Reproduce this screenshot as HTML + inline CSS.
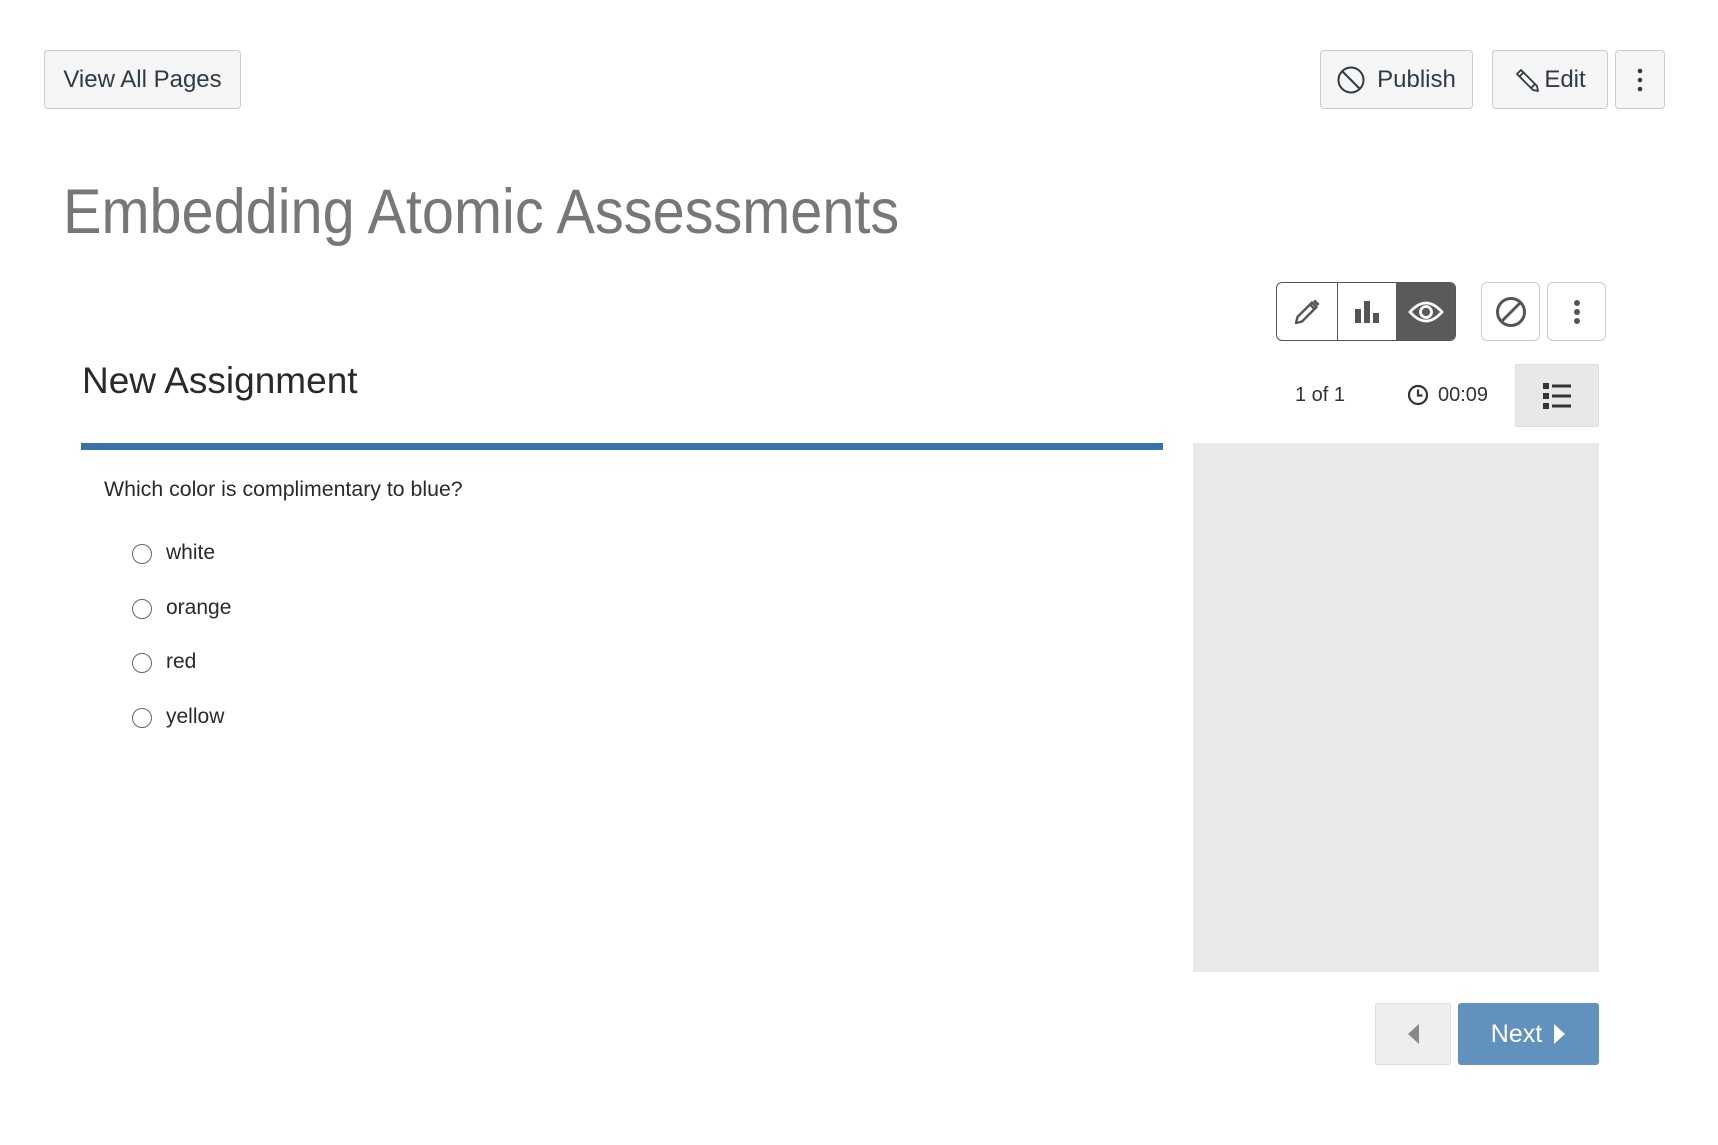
<!DOCTYPE html>
<html><head><meta charset="utf-8"><style>
*{box-sizing:border-box;margin:0;padding:0}
body{width:1718px;height:1145px;background:#fff;position:relative;overflow:hidden;font-family:"Liberation Sans",sans-serif;color:#2d3b45}
.abs{position:absolute}
.btn{position:absolute;background:#f5f5f5;border:1px solid #c7cdd1;border-radius:4px;display:flex;align-items:center;justify-content:center;font-size:24px;color:#2d3b45}
</style></head><body>
<div class="btn" style="left:44px;top:50px;width:197px;height:59px">View All Pages</div>
<div class="btn" style="left:1320px;top:50px;width:153px;height:59px">
<svg width="28" height="28" viewBox="0 0 28 28" style="margin-right:12px"><circle cx="14" cy="14" r="12.5" fill="none" stroke="#2d3b45" stroke-width="2"/><line x1="5.5" y1="5.5" x2="22.5" y2="22.5" stroke="#2d3b45" stroke-width="2"/></svg>Publish</div>
<div class="btn" style="left:1492px;top:50px;width:116px;height:59px">
<svg width="26" height="26" viewBox="0 0 26 26" style="margin-right:4px"><path d="M3 7 L7 3 L23 19 L24 24 L19 23 Z M5.5 9.5 L9.5 5.5 M17 21 L21 17" fill="none" stroke="#2d3b45" stroke-width="1.8" stroke-linejoin="round"/></svg>Edit</div>
<div class="btn" style="left:1615px;top:50px;width:50px;height:59px">
<svg width="6" height="24"><circle cx="3" cy="3" r="2.3" fill="#2d3b45"/><circle cx="3" cy="12" r="2.3" fill="#2d3b45"/><circle cx="3" cy="21" r="2.3" fill="#2d3b45"/></svg></div>

<div class="abs" style="left:63px;top:176px;font-size:63px;color:#777;white-space:nowrap;transform:scaleX(0.915);transform-origin:0 0">Embedding Atomic Assessments</div>

<div class="abs" style="left:1276px;top:282px;width:180px;height:59px;border:1.5px solid #555;border-radius:6px;overflow:hidden;display:flex">
 <div style="width:61px;border-right:1.5px solid #555;display:flex;align-items:center;justify-content:center">
  <svg width="30" height="30" viewBox="0 0 30 30"><path d="M4 26 L5.5 20 L20 5.5 L24.5 10 L10 24.5 Z M18 7.5 L22.5 12" fill="none" stroke="#555" stroke-width="2.4" stroke-linejoin="round"/><path d="M21 4.5 L23 2.5 L27.5 7 L25.5 9 Z" fill="#555"/></svg></div>
 <div style="width:58px;display:flex;align-items:center;justify-content:center">
  <svg width="26" height="26" viewBox="0 0 26 26"><rect x="1" y="10" width="6" height="14" fill="#555"/><rect x="10" y="2" width="6" height="22" fill="#555"/><rect x="19" y="14" width="6" height="10" fill="#555"/></svg></div>
 <div style="flex:1;background:#5a5a5a;display:flex;align-items:center;justify-content:center">
  <svg width="36" height="24" viewBox="0 0 36 24"><path d="M2 12 Q18 -6 34 12 Q18 30 2 12 Z" fill="none" stroke="#fff" stroke-width="2.8"/><circle cx="18" cy="12" r="5.5" fill="none" stroke="#fff" stroke-width="2.8"/></svg></div>
</div>
<div class="abs" style="left:1481px;top:282px;width:59px;height:59px;border:1.5px solid #ccc;border-radius:6px;display:flex;align-items:center;justify-content:center">
 <svg width="32" height="32" viewBox="0 0 32 32"><circle cx="16" cy="16" r="13.5" fill="none" stroke="#555" stroke-width="3"/><line x1="7" y1="25" x2="25" y2="7" stroke="#555" stroke-width="3"/></svg></div>
<div class="abs" style="left:1547px;top:282px;width:59px;height:59px;border:1.5px solid #ccc;border-radius:6px;display:flex;align-items:center;justify-content:center">
 <svg width="8" height="26"><circle cx="4" cy="4" r="3" fill="#555"/><circle cx="4" cy="13" r="3" fill="#555"/><circle cx="4" cy="22" r="3" fill="#555"/></svg></div>

<div class="abs" style="left:82px;top:360px;font-size:37px;color:#2a2a2a">New Assignment</div>

<div class="abs" style="left:1295px;top:384px;font-size:20px;color:#333">1 of 1</div>
<svg class="abs" style="left:1407px;top:384px" width="22" height="22" viewBox="0 0 22 22"><circle cx="11" cy="11" r="9" fill="none" stroke="#333" stroke-width="2.2"/><path d="M11 5.5 V11.5 H15.5" fill="none" stroke="#333" stroke-width="2.2"/></svg>
<div class="abs" style="left:1438px;top:384px;font-size:20px;color:#333">00:09</div>
<div class="abs" style="left:1515px;top:364px;width:84px;height:63px;background:#e8e8e8;border:1px solid #ddd;border-radius:2px;display:flex;align-items:center;justify-content:center">
 <svg width="28" height="26" viewBox="0 0 28 26"><rect x="0" y="0" width="6" height="6" fill="#333"/><rect x="0" y="10" width="6" height="6" fill="#333"/><rect x="0" y="20" width="6" height="6" fill="#333"/><rect x="9" y="1.5" width="19" height="3" fill="#333"/><rect x="9" y="11.5" width="19" height="3" fill="#333"/><rect x="9" y="21.5" width="19" height="3" fill="#333"/></svg></div>

<div class="abs" style="left:81px;top:443px;width:1082px;height:7px;background:#3872ab"></div>
<div class="abs" style="left:1193px;top:443px;width:406px;height:529px;background:#e9e9e9"></div>

<div class="abs" style="left:104px;top:477px;font-size:21.3px;color:#2a2a2a">Which color is complimentary to blue?</div>
<div class="abs" style="left:132px;top:544px;width:20px;height:20px;border:1.5px solid #666;border-radius:50%"></div>
<div class="abs" style="left:166px;top:541px;font-size:21px;color:#2a2a2a">white</div>
<div class="abs" style="left:132px;top:599px;width:20px;height:20px;border:1.5px solid #666;border-radius:50%"></div>
<div class="abs" style="left:166px;top:596px;font-size:21px;color:#2a2a2a">orange</div>
<div class="abs" style="left:132px;top:653px;width:20px;height:20px;border:1.5px solid #666;border-radius:50%"></div>
<div class="abs" style="left:166px;top:650px;font-size:21px;color:#2a2a2a">red</div>
<div class="abs" style="left:132px;top:708px;width:20px;height:20px;border:1.5px solid #666;border-radius:50%"></div>
<div class="abs" style="left:166px;top:705px;font-size:21px;color:#2a2a2a">yellow</div>

<div class="abs" style="left:1375px;top:1003px;width:76px;height:62px;background:#eee;border:1.5px solid #ddd;border-radius:3px;display:flex;align-items:center;justify-content:center">
 <svg width="12" height="20"><path d="M12 0 V20 L1 10 Z" fill="#888"/></svg></div>
<div class="abs" style="left:1458px;top:1003px;width:141px;height:62px;background:#6191bd;border-radius:3px;display:flex;align-items:center;justify-content:center;color:#fff;font-size:25px">Next<svg width="12" height="20" style="margin-left:12px"><path d="M0 0 V20 L11 10 Z" fill="#fff"/></svg></div>
</body></html>
